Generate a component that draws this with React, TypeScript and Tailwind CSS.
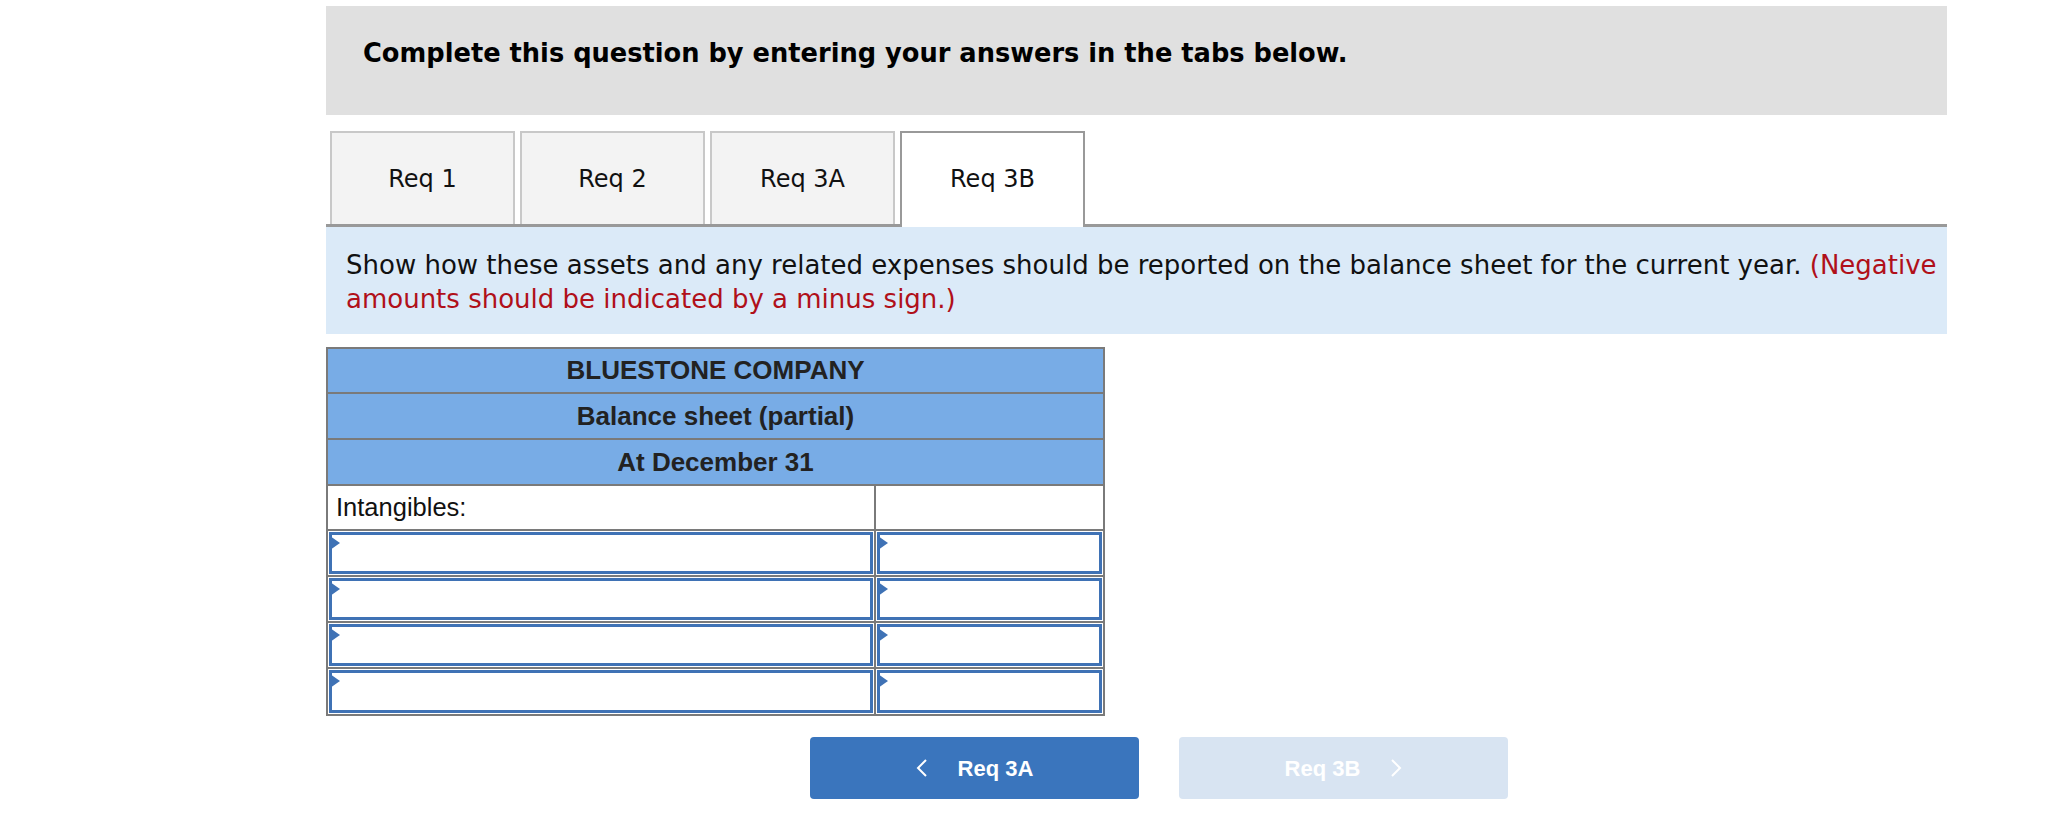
import React from "react";

const verdana = { fontFamily: '"DejaVu Sans", Verdana, sans-serif' };
const arial = { fontFamily: '"Liberation Sans", Arial, Helvetica, sans-serif' };

function Tab({ label, active }: { label: string; active?: boolean }) {
  return (
    <div
      className={
        active
          ? "w-[185px] h-[96px] -mb-[3px] pb-[3px] bg-white border-2 border-b-0 border-[#999999] flex items-center justify-center text-[24px] text-[#111]"
          : "w-[185px] h-[93px] bg-[#f3f3f3] border-2 border-b-0 border-[#c8c8c8] flex items-center justify-center text-[24px] text-[#111]"
      }
    >
      {label}
    </div>
  );
}

function InputCell({ right }: { right?: boolean }) {
  return (
    <div className={right ? "w-[227px] relative p-[1px]" : "flex-1 relative p-[1px]"}>
      <div className="w-full h-full border-[3px] border-[#3f72b5] bg-white" />
      <svg className="absolute left-[2px] top-[5px]" width="10" height="14" viewBox="0 0 10 14">
        <polygon points="0,0 10,7 0,14" fill="#3f72b5" />
      </svg>
    </div>
  );
}

export default function App() {
  return (
    <div className="w-[2048px] h-[825px] bg-white pt-[6px]">
      <div className="ml-[326px] w-[1621px]">
        <div className="h-[109px] bg-[#e0e0e0] pl-[37px] pt-[31px]" style={verdana}>
          <div className="text-[25.7px] leading-[32px] font-bold text-black">
            Complete this question by entering your answers in the tabs below.
          </div>
        </div>

        <div className="mt-[16px] flex items-end gap-[5px] pl-[4px] border-b-[3px] border-[#999999]" style={verdana}>
          <Tab label="Req 1" />
          <Tab label="Req 2" />
          <Tab label="Req 3A" />
          <Tab label="Req 3B" active />
        </div>

        <div className="h-[107px] bg-[#dbeaf8] pl-[20px] pr-[4px] pt-[21px] text-[26px] leading-[34px] text-[#111]" style={verdana}>
          Show how these assets and any related expenses should be reported on the balance sheet for the current year.{" "}
          <span className="text-[#b0101a]">(Negative amounts should be indicated by a minus sign.)</span>
        </div>

        <div className="mt-[13px] w-[779px] border-2 border-[#7a7a7a] text-[#222]" style={arial}>
          <div className="h-[45px] bg-[#78ace6] border-b-2 border-[#7a7a7a] flex items-center justify-center text-[26px] font-bold">
            BLUESTONE COMPANY
          </div>
          <div className="h-[46px] bg-[#78ace6] border-b-2 border-[#7a7a7a] flex items-center justify-center text-[26px] font-bold">
            Balance sheet (partial)
          </div>
          <div className="h-[46px] bg-[#78ace6] border-b-2 border-[#7a7a7a] flex items-center justify-center text-[26px] font-bold">
            At December 31
          </div>
          <div className="h-[45px] flex border-b-2 border-[#7a7a7a]">
            <div className="flex-1 flex items-center pl-[8px] text-[25.5px] text-[#111] border-r-2 border-[#7a7a7a]">
              Intangibles:
            </div>
            <div className="w-[227px]" />
          </div>
          {[0, 1, 2, 3].map((i) => (
            <div key={i} className={i < 3 ? "h-[46px] flex border-b-2 border-[#7a7a7a]" : "h-[45px] flex"}>
              <InputCell />
              <div className="w-[2px] bg-[#7a7a7a]" />
              <InputCell right />
            </div>
          ))}
        </div>

        <div className="mt-[21px] ml-[484px] flex gap-[40px]" style={arial}>
          <button className="w-[329px] h-[62px] rounded-[4px] bg-[#3a75bd] text-white font-bold text-[22px] flex items-center justify-center gap-[30px]">
            <svg width="12" height="20" viewBox="0 0 12 20">
              <polyline points="10,2 2,10 10,18" fill="none" stroke="white" strokeWidth="2" />
            </svg>
            <span>Req 3A</span>
          </button>
          <button className="w-[329px] h-[62px] rounded-[4px] bg-[#d8e4f2] text-white font-bold text-[22px] flex items-center justify-center gap-[30px]">
            <span>Req 3B</span>
            <svg width="12" height="20" viewBox="0 0 12 20">
              <polyline points="2,2 10,10 2,18" fill="none" stroke="white" strokeWidth="2" />
            </svg>
          </button>
        </div>
      </div>
    </div>
  );
}
